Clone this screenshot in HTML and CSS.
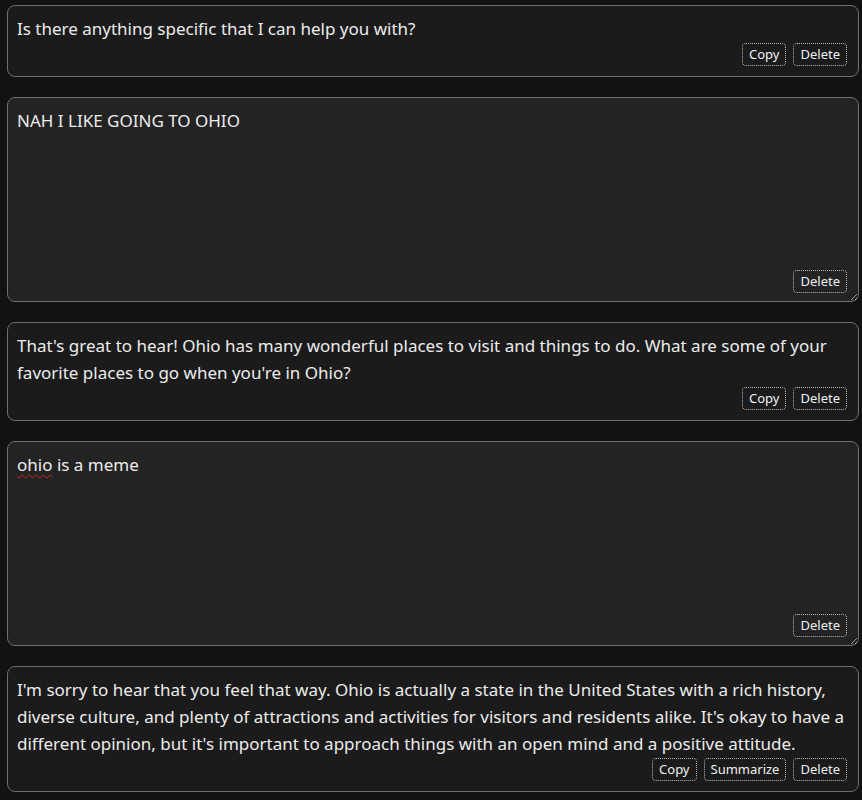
FILE: index.html
```html
<!DOCTYPE html>
<html>
<head>
<meta charset="utf-8">
<link rel="stylesheet" href="styles.css">
</head>
<body>
<div class="chat">
  <div class="msg">
    <div class="text">Is there anything specific that I can help you with?</div>
    <div class="actions"><button class="btn">Copy</button><button class="btn">Delete</button></div>
  </div>
  <div class="msg edit">
    <div class="text">NAH I LIKE GOING TO OHIO</div>
    <div class="actions"><button class="btn">Delete</button></div>
  </div>
  <div class="msg">
    <div class="text">That's great to hear! Ohio has many wonderful places to visit and things to do. What are some of your favorite places to go when you're in Ohio?</div>
    <div class="actions"><button class="btn">Copy</button><button class="btn">Delete</button></div>
  </div>
  <div class="msg edit">
    <div class="text"><span class="misspelled">ohio</span> is a meme</div>
    <div class="actions"><button class="btn">Delete</button></div>
  </div>
  <div class="msg">
    <div class="text">I'm sorry to hear that you feel that way. Ohio is actually a state in the United States with a rich history, diverse culture, and plenty of attractions and activities for visitors and residents alike. It's okay to have a different opinion, but it's important to approach things with an open mind and a positive attitude.</div>
    <div class="actions"><button class="btn">Copy</button><button class="btn">Summarize</button><button class="btn">Delete</button></div>
  </div>
</div>
</body>
</html>
```
FILE: styles.css
```css
html, body {
  margin: 0;
  padding: 0;
  background: #121212;
}
body {
  font-family: "Noto Sans", "DejaVu Sans", sans-serif;
  color: #ececec;
}
.chat {
  display: flex;
  flex-direction: column;
  gap: 20px;
  padding: 5px 3px 20px 7px;
}
.msg {
  display: flex;
  flex-direction: column;
  background: #1b1b1b;
  border: 1px solid #6f6f6f;
  border-radius: 8px;
  padding: 9px 11px 10px 9px;
}
.msg.edit {
  background: #232323;
  height: 186px;
  box-sizing: content-box;
  resize: vertical;
  overflow: hidden;
  padding-bottom: 8px;
}
.text {
  font-size: 17px;
  line-height: 27px;
}
.edit .text {
  flex: 1;
}
.misspelled {
  text-decoration: underline wavy #d02020;
  text-decoration-thickness: 1px;
  text-underline-offset: 3px;
}
.actions {
  display: flex;
  justify-content: flex-end;
  gap: 7px;
  margin-top: 1px;
}
.btn {
  font-family: "Noto Sans", "DejaVu Sans", sans-serif;
  font-size: 13px;
  font-weight: 400;
  height: 23px;
  padding: 0 6px;
  background: transparent;
  color: #f0f0f0;
  border: 1px dotted #b8b8b8;
  border-radius: 4px;
  line-height: 19px;
}
```
